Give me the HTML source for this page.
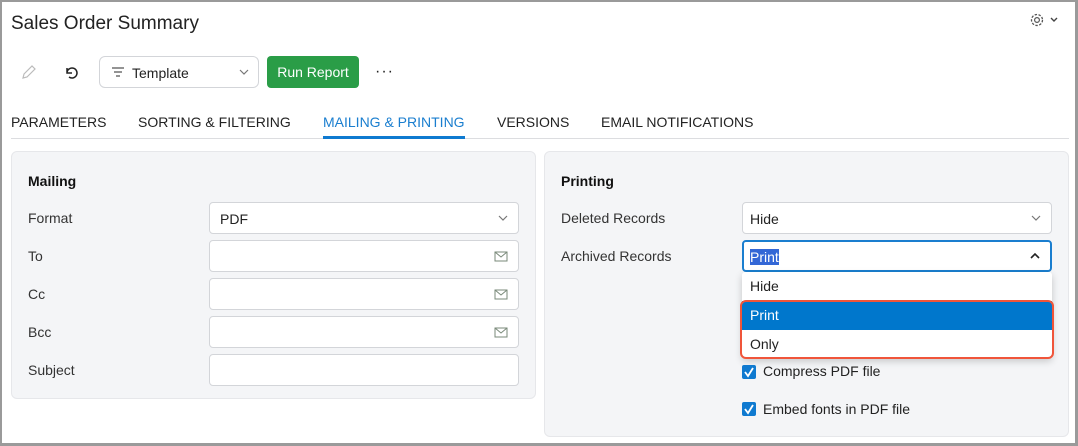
<!DOCTYPE html><html><head><style>
*{box-sizing:border-box;margin:0;padding:0}
body{width:1078px;height:446px;background:#fff;font-family:"Liberation Sans",sans-serif;color:#222;position:relative;overflow:hidden}
.frame{position:absolute;inset:0;border:2px solid #9a9a9a;border-right-width:3px;border-bottom-width:3px}
.a{position:absolute}
.t14{font-size:14px}
.inp{position:absolute;height:32px;background:#fff;border:1px solid #d3d5d9;border-radius:4px;font-size:14px;padding:8px 10px}
.panel{position:absolute;background:#f4f5f7;border:1px solid #e6e7ea;border-radius:6px}
.lbl{position:absolute;font-size:14px;color:#333}
.chev{position:absolute;right:10px;top:11px}
.tab{position:absolute;top:114px;font-size:14px;color:#222}
.cb{position:absolute;width:14px;height:14px;background:#0f7ad0;border-radius:2px}
</style></head><body>
<div class="a" style="left:11px;top:13px;font-size:19px;color:#222">Sales Order Summary</div>
<svg class="a" style="left:1029px;top:12px" width="34" height="18" viewBox="0 0 34 18"><circle cx="8" cy="8" r="2.4" fill="none" stroke="#555" stroke-width="1.2"/><circle cx="8" cy="8" r="5.5" fill="none" stroke="#555" stroke-width="1.3" stroke-dasharray="2.4 1.5"/><path d="M22 6l3 3 3-3" fill="none" stroke="#444" stroke-width="1.4"/></svg>
<svg class="a" style="left:20px;top:63px" width="18" height="18"><path d="M3 15l1-4 8-8 3 3-8 8z" fill="none" stroke="#bbb" stroke-width="1.2"/></svg>
<svg class="a" style="left:63px;top:63px" width="18" height="18"><path d="M4 5v5h5M4 10a5 5 0 1 1 2 4" fill="none" stroke="#222" stroke-width="1.5"/></svg>
<div class="inp" style="left:99px;top:56px;width:160px;height:32px;border-radius:6px;padding:8px 0 0 32px">Template</div>
<svg class="a" style="left:111px;top:66px" width="14" height="12"><path d="M1 2h12M3 6h8M5 10h4" stroke="#555" stroke-width="1.3"/></svg>
<svg class="a" style="left:239px;top:68px" width="10" height="8"><path d="M1 2l4 4 4-4" fill="none" stroke="#777" stroke-width="1.2"/></svg>
<div class="a" style="left:267px;top:56px;width:92px;height:32px;background:#2a9d47;border-radius:4px;color:#fff;font-size:14px;text-align:center;line-height:32px">Run Report</div>
<div class="a" style="left:375px;top:63px;font-size:16px;letter-spacing:1px">···</div>
<div class="tab" style="left:11px">PARAMETERS</div>
<div class="tab" style="left:138px">SORTING &amp; FILTERING</div>
<div class="tab" style="left:323px;color:#1a7ecf">MAILING &amp; PRINTING</div>
<div class="tab" style="left:497px">VERSIONS</div>
<div class="tab" style="left:601px">EMAIL NOTIFICATIONS</div>
<div class="a" style="left:11px;top:138px;width:1058px;height:1px;background:#dcdde0"></div>
<div class="a" style="left:323px;top:136px;width:142px;height:3px;background:#0f7ad0"></div>

<div class="panel" style="left:11px;top:151px;width:525px;height:248px"></div>
<div class="a" style="left:28px;top:173px;font-size:14px;font-weight:bold;color:#111">Mailing</div>
<div class="lbl" style="left:28px;top:210px">Format</div>
<div class="lbl" style="left:28px;top:248px">To</div>
<div class="lbl" style="left:28px;top:286px">Cc</div>
<div class="lbl" style="left:28px;top:324px">Bcc</div>
<div class="lbl" style="left:28px;top:362px">Subject</div>
<div class="inp" style="left:209px;top:202px;width:310px">PDF<svg class="chev" width="10" height="8"><path d="M1 2l4 4 4-4" fill="none" stroke="#777" stroke-width="1.2"/></svg></div>
<div class="inp" style="left:209px;top:240px;width:310px"><svg class="chev" style="top:10px" width="14" height="11"><rect x="1" y="1" width="12" height="9" fill="none" stroke="#7a8a7a"/><path d="M1 1l6 5 6-5" fill="none" stroke="#7a8a7a"/></svg></div>
<div class="inp" style="left:209px;top:278px;width:310px"><svg class="chev" style="top:10px" width="14" height="11"><rect x="1" y="1" width="12" height="9" fill="none" stroke="#7a8a7a"/><path d="M1 1l6 5 6-5" fill="none" stroke="#7a8a7a"/></svg></div>
<div class="inp" style="left:209px;top:316px;width:310px"><svg class="chev" style="top:10px" width="14" height="11"><rect x="1" y="1" width="12" height="9" fill="none" stroke="#7a8a7a"/><path d="M1 1l6 5 6-5" fill="none" stroke="#7a8a7a"/></svg></div>
<div class="inp" style="left:209px;top:354px;width:310px"></div>

<div class="panel" style="left:544px;top:151px;width:525px;height:286px"></div>
<div class="a" style="left:561px;top:173px;font-size:14px;font-weight:bold;color:#111">Printing</div>
<div class="lbl" style="left:561px;top:210px">Deleted Records</div>
<div class="lbl" style="left:561px;top:248px">Archived Records</div>
<div class="inp" style="left:742px;top:202px;width:310px;padding-left:7px">Hide<svg class="chev" width="10" height="8"><path d="M1 2l4 4 4-4" fill="none" stroke="#777" stroke-width="1.2"/></svg></div>
<div class="inp" style="left:742px;top:240px;width:310px;border:2px solid #1a7ecf;padding:7px 6px"><span style="background:#3367d6;color:#fff">Print</span><svg class="chev" style="right:10px;top:10px" width="10" height="8"><path d="M1 6l4-4 4 4" fill="none" stroke="#222" stroke-width="1.6"/></svg></div>
<div class="a" style="left:742px;top:272px;width:310px;height:86px;background:#fff;box-shadow:0 3px 8px rgba(0,0,0,.2);border-radius:3px"></div>
<div class="a t14" style="left:750px;top:278px">Hide</div>
<div class="a" style="left:742px;top:301px;width:310px;height:29px;background:#0077cc"></div>
<div class="a t14" style="left:750px;top:307px;color:#fff">Print</div>
<div class="a t14" style="left:750px;top:336px">Only</div>
<div class="a" style="left:740px;top:300px;width:314px;height:59px;border:2px solid #f0553a;border-radius:6px"></div>
<div class="cb" style="left:742px;top:365px"></div><svg class="a" style="left:742px;top:365px" width="14" height="14"><path d="M3 7l3 4 5-8" fill="none" stroke="#fff" stroke-width="1.8"/></svg>
<div class="a t14" style="left:763px;top:363px">Compress PDF file</div>
<div class="cb" style="left:742px;top:402px"></div><svg class="a" style="left:742px;top:402px" width="14" height="14"><path d="M3 7l3 4 5-8" fill="none" stroke="#fff" stroke-width="1.8"/></svg>
<div class="a t14" style="left:763px;top:401px">Embed fonts in PDF file</div>
<div class="frame"></div>
</body></html>
